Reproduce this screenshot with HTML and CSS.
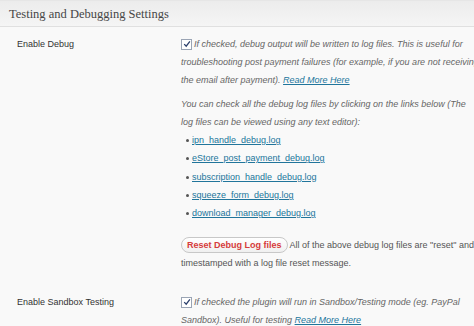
FILE: index.html
```html
<!DOCTYPE html>
<html>
<head>
<meta charset="utf-8">
<link rel="stylesheet" href="styles.css">
</head>
<body>
<div class="box">
  <h3 class="title">Testing and Debugging Settings</h3>
  <div class="inside">
    <div class="row">
      <div class="label">Enable Debug</div>
      <div class="field">
        <p class="desc"><span class="cb"><svg viewBox="0 0 10 10" width="8" height="8"><path d="M1.5 5.2 L4 7.8 L8.6 1.8" fill="none" stroke="#2b3f6b" stroke-width="1.6"/></svg></span>If checked, debug output will be written to log files. This is useful for troubleshooting post payment failures (for example, if you are not receiving the email after payment). <a href="#">Read More Here</a></p>
        <p class="desc gap">You can check all the debug log files by clicking on the links below (The log files can be viewed using any text editor):</p>
        <ul class="logs">
          <li><a href="#">ipn_handle_debug.log</a></li>
          <li><a href="#">eStore_post_payment_debug.log</a></li>
          <li><a href="#">subscription_handle_debug.log</a></li>
          <li><a href="#">squeeze_form_debug.log</a></li>
          <li><a href="#">download_manager_debug.log</a></li>
        </ul>
        <p class="plain"><span class="btn">Reset Debug Log files</span> All of the above debug log files are "reset" and timestamped with a log file reset message.</p>
      </div>
    </div>
    <div class="row row2">
      <div class="label">Enable Sandbox Testing</div>
      <div class="field">
        <p class="desc"><span class="cb"><svg viewBox="0 0 10 10" width="8" height="8"><path d="M1.5 5.2 L4 7.8 L8.6 1.8" fill="none" stroke="#2b3f6b" stroke-width="1.6"/></svg></span>If checked the plugin will run in Sandbox/Testing mode (eg. PayPal Sandbox). Useful for testing <a href="#">Read More Here</a></p>
      </div>
    </div>
  </div>
</div>
</body>
</html>
```
FILE: styles.css
```css
html, body {
  margin: 0;
  padding: 0;
  background: #f9f9f9;
}
body {
  width: 474px;
  height: 326px;
  overflow: hidden;
  font-family: "Liberation Sans", Arial, sans-serif;
  font-size: 9px;
  color: #333;
}
.box {
  width: 520px;
}
.title {
  margin: 0;
  height: 27px;
  box-sizing: border-box;
  padding: 6px 0 0 9px;
  font-family: "Liberation Serif", "Times New Roman", serif;
  font-weight: normal;
  font-size: 12.5px;
  line-height: 15px;
  color: #464646;
  background: linear-gradient(#ececec, #f5f5f5);
  border-bottom: 1px solid #e0e0e0;
  border-top: 1px solid #e6e6e6;
}
.inside {
  padding-top: 8px;
}
.row {
  display: flex;
}
.row2 {
  margin-top: 21px;
}
.label {
  width: 164px;
  flex: none;
  padding-left: 17px;
  line-height: 18px;
  color: #333;
}
.field {
  width: 298px;
  flex: none;
  line-height: 18px;
}
.desc {
  margin: 0;
  font-style: italic;
  color: #666;
}
.gap {
  margin-top: 6px;
}
.plain {
  margin: 14px 0 0;
  color: #555;
}
.cb {
  display: inline-flex;
  align-items: center;
  justify-content: center;
  width: 9px;
  height: 9px;
  border: 1px solid #9aa4b4;
  background: #fff;
  vertical-align: -1px;
  margin: 0 2px 0 0;
}
a {
  color: #21759b;
  text-decoration: underline;
}
.logs {
  margin: 0;
  padding: 0 0 0 11px;
  list-style: none;
}
.logs li {
  line-height: 18.3px;
  position: relative;
}
.logs li::before {
  content: "";
  position: absolute;
  left: -6px;
  top: 8px;
  width: 3px;
  height: 3px;
  border-radius: 50%;
  background: #555;
}
.btn {
  display: inline-block;
  padding: 0 5px;
  line-height: 14px;
  border: 1px solid #c8c8c8;
  border-radius: 9px;
  background: linear-gradient(#fff, #f0f0f0);
  color: #d63b3b;
  font-weight: bold;
}
```
